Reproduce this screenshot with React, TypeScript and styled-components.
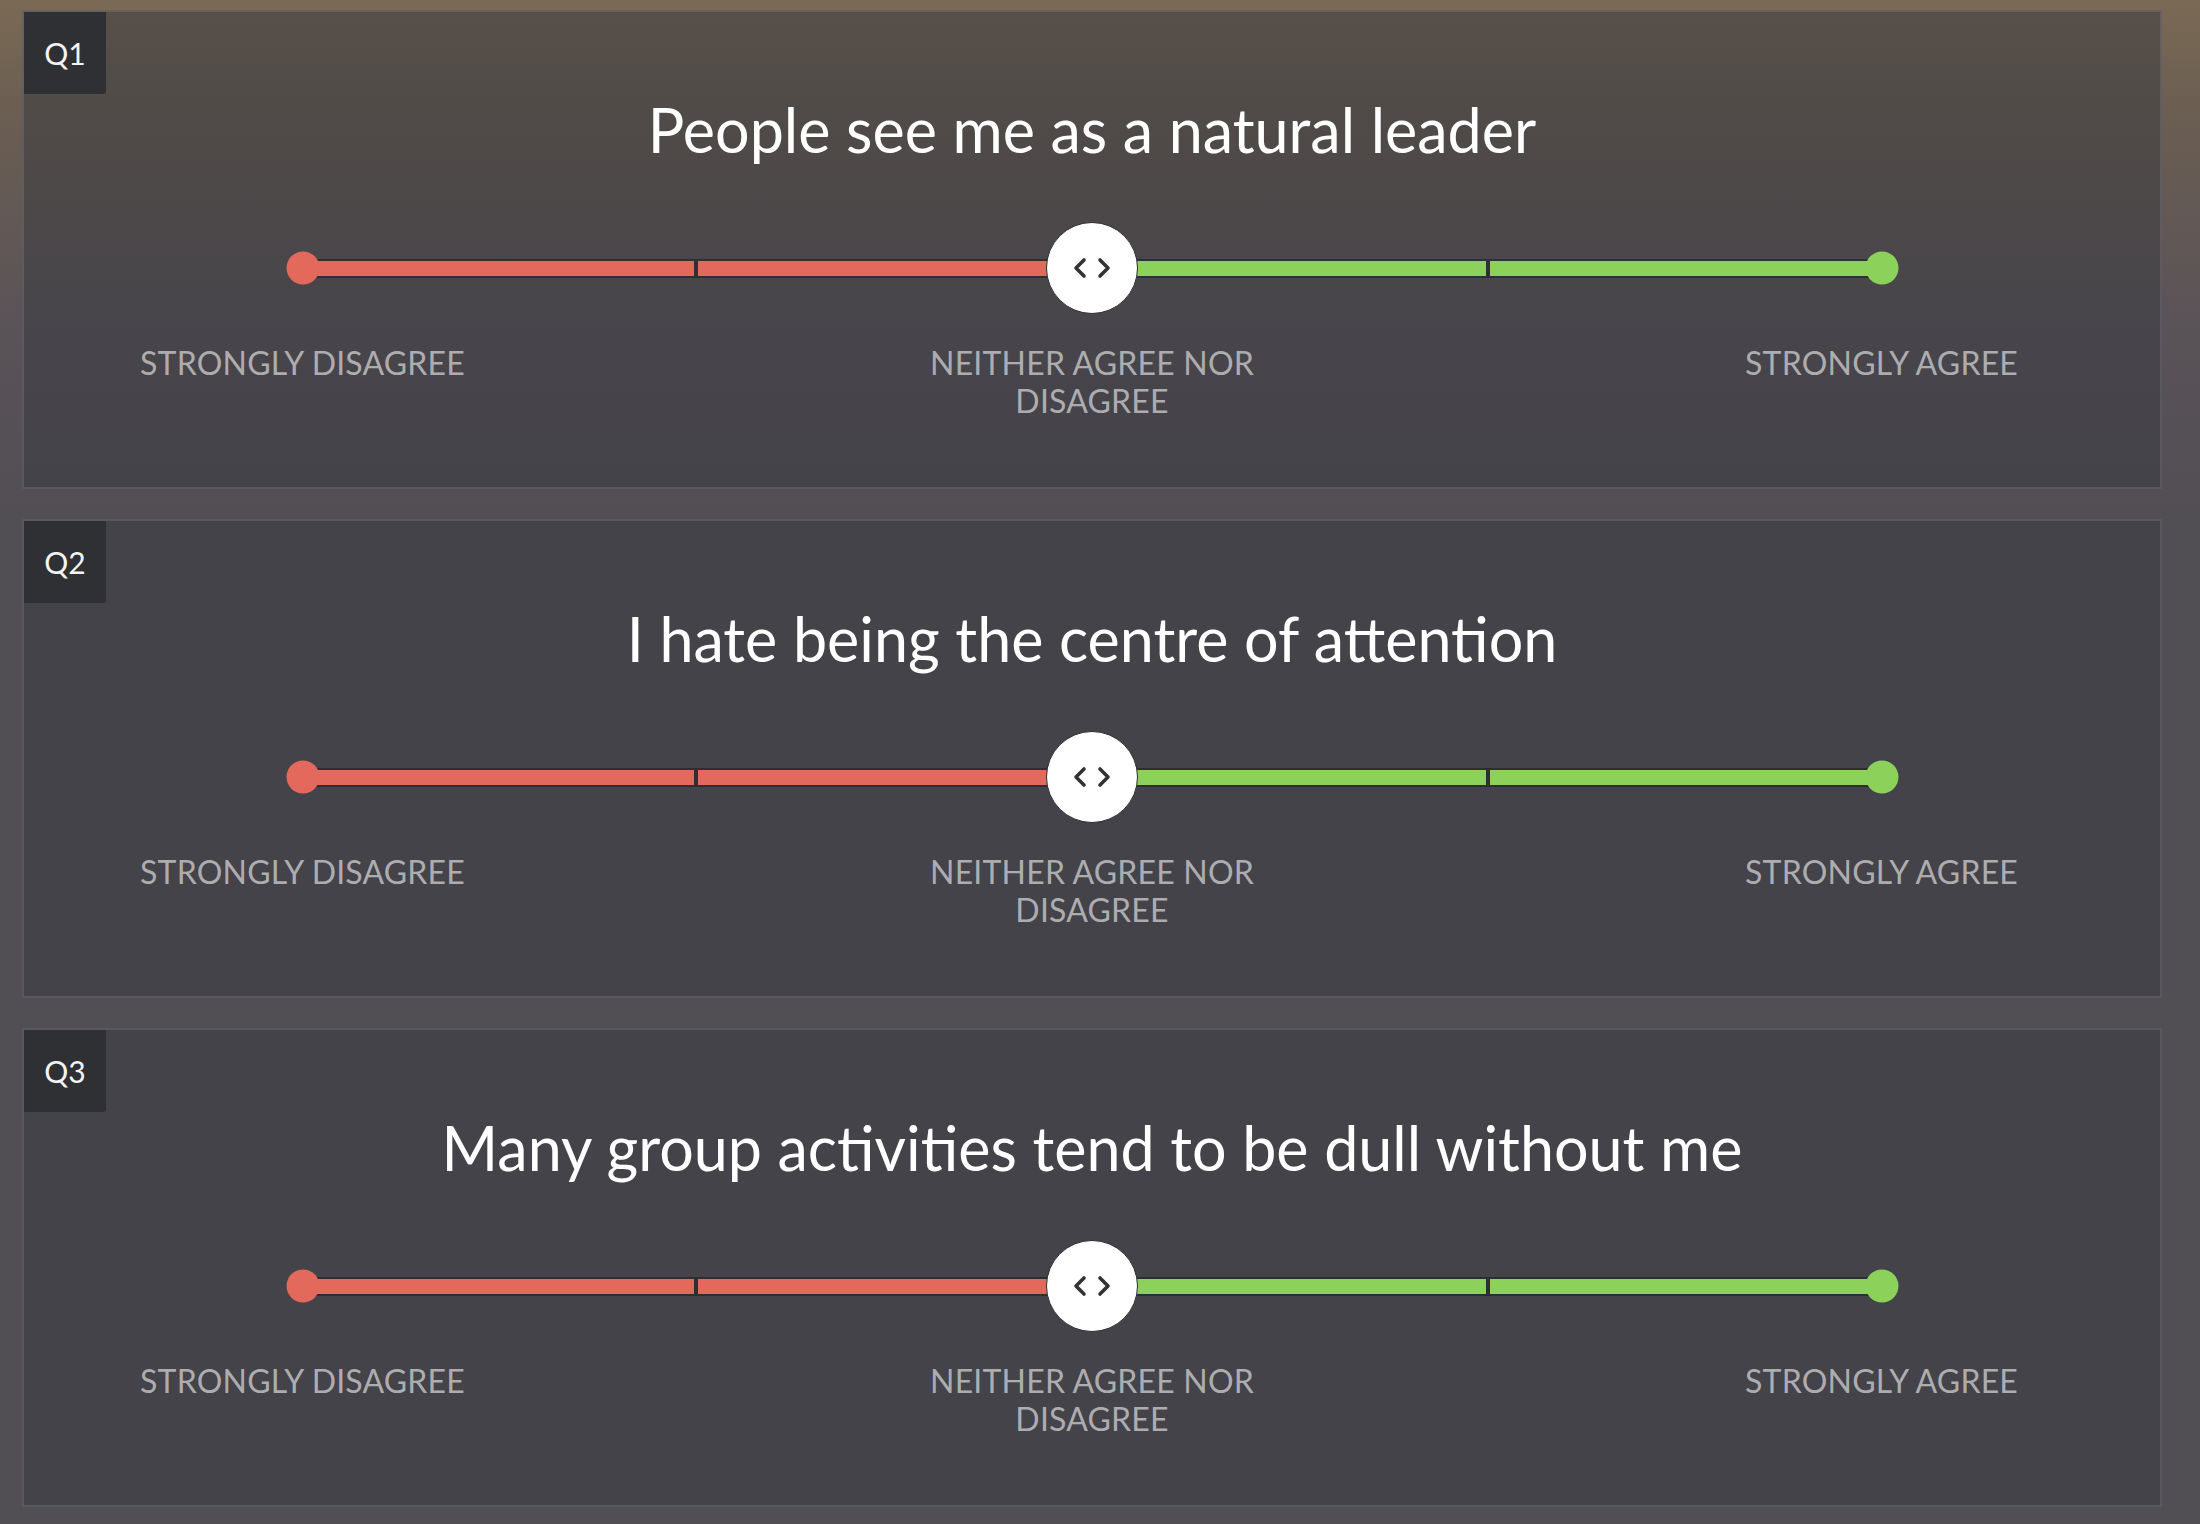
import React from "react";
import styled, { createGlobalStyle } from "styled-components";

const Global = createGlobalStyle`
  html, body {
    margin: 0;
    padding: 0;
  }
  body {
    width: 2200px;
    min-height: 1524px;
    background: linear-gradient(180deg, #7a6a55 0px, #6b5e52 110px, #5a5358 320px, #514e54 520px, #514e54 100%);
    font-family: Lato, "Open Sans", "Liberation Sans", sans-serif;
  }
`;

const Page = styled.main`
  display: flex;
  flex-direction: column;
  gap: 30px;
  padding: 10px 38px 16px 22px;
`;

const Card = styled.section`
  position: relative;
  box-sizing: border-box;
  height: 479px;
  border: 2px solid rgba(150, 150, 158, 0.26);
  background: rgba(54, 56, 62, 0.5);
  display: flex;
  flex-direction: column;
  align-items: center;
  padding-top: 82px;
`;

const Badge = styled.div`
  position: absolute;
  top: 0;
  left: 0;
  width: 82px;
  height: 82px;
  background: #2e3033;
  border-bottom-right-radius: 3px;
  color: #f4f4f4;
  font-size: 30px;
  display: flex;
  align-items: center;
  justify-content: center;
`;

const Title = styled.h2`
  margin: 0;
  font-weight: 400;
  font-size: 61px;
  line-height: 72px;
  color: #ffffff;
  text-align: center;
`;

const SliderRow = styled.div`
  position: relative;
  margin-top: 56px;
  width: 1579px;
  height: 92px;
  display: flex;
  align-items: center;
  gap: 4px;
`;

const Segment = styled.div<{ $tone: "red" | "green" }>`
  flex: 1;
  height: 15px;
  background: ${(p) => (p.$tone === "red" ? "#e3695c" : "#8cd15a")};
  box-shadow: 0 0 0 2px rgba(38, 36, 44, 0.7);
`;

const EndDot = styled.span<{ $side: "left" | "right" }>`
  position: absolute;
  top: 50%;
  ${(p) => (p.$side === "left" ? "left: 0;" : "right: 0;")}
  width: 33px;
  height: 33px;
  border-radius: 50%;
  transform: translate(${(p) => (p.$side === "left" ? "-50%" : "50%")}, -50%);
  background: ${(p) => (p.$side === "left" ? "#e3695c" : "#8cd15a")};
`;

const Knob = styled.button`
  position: absolute;
  top: 50%;
  left: 50%;
  transform: translate(-50%, -50%);
  width: 92px;
  height: 92px;
  border-radius: 50%;
  background: #ffffff;
  border: 1.5px solid #2b2a30;
  padding: 0;
  display: flex;
  align-items: center;
  justify-content: center;
  cursor: grab;
`;

const Labels = styled.div`
  margin-top: 30px;
  width: 1999px;
  display: flex;
  justify-content: space-between;
  align-items: flex-start;
`;

const Label = styled.div`
  width: 420px;
  text-align: center;
  text-transform: uppercase;
  font-size: 32px;
  letter-spacing: 0.2px;
  line-height: 38px;
  color: #adadb0;
  padding: 0 30px;
  box-sizing: border-box;
`;

const Chevrons = () => (
  <svg width="44" height="22" viewBox="0 0 44 22" fill="none">
    <path d="M14 3 L6 11 L14 19" stroke="#333337" strokeWidth="3.6" strokeLinecap="round" strokeLinejoin="round" />
    <path d="M30 3 L38 11 L30 19" stroke="#333337" strokeWidth="3.6" strokeLinecap="round" strokeLinejoin="round" />
  </svg>
);

const questions = [
  "People see me as a natural leader",
  "I hate being the centre of attention",
  "Many group activities tend to be dull without me",
];

export default function App() {
  return (
    <>
      <Global />
      <Page>
        {questions.map((q, i) => (
          <Card key={q}>
            <Badge>Q{i + 1}</Badge>
            <Title>{q}</Title>
            <SliderRow>
              <Segment $tone="red" />
              <Segment $tone="red" />
              <Segment $tone="green" />
              <Segment $tone="green" />
              <EndDot $side="left" />
              <EndDot $side="right" />
              <Knob aria-label="slider handle">
                <Chevrons />
              </Knob>
            </SliderRow>
            <Labels>
              <Label>Strongly disagree</Label>
              <Label>Neither agree nor disagree</Label>
              <Label>Strongly agree</Label>
            </Labels>
          </Card>
        ))}
      </Page>
    </>
  );
}
